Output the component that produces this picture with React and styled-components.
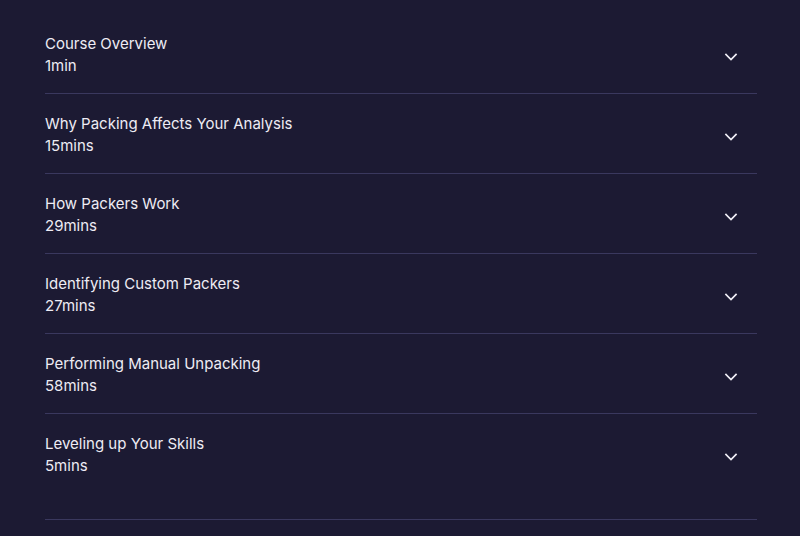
import React from 'react'
import styled, { createGlobalStyle } from 'styled-components'

const GlobalStyle = createGlobalStyle`
  html, body {
    margin: 0;
    padding: 0;
    background: #1c1a33;
  }
  body {
    font-family: Inter, "Noto Sans", sans-serif;
  }
`

const lessons = [
  { title: 'Course Overview', time: '1min' },
  { title: 'Why Packing Affects Your Analysis', time: '15mins' },
  { title: 'How Packers Work', time: '29mins' },
  { title: 'Identifying Custom Packers', time: '27mins' },
  { title: 'Performing Manual Unpacking', time: '58mins' },
  { title: 'Leveling up Your Skills', time: '5mins' },
]

function Chevron() {
  return (
    <svg width="14" height="14" viewBox="0 0 14 14" fill="none">
      <path d="M2 4.5 L7 9.5 L12 4.5" stroke="#f2f0f8" strokeWidth="1.7" strokeLinecap="square" />
    </svg>
  )
}

function App() {
  return (
    <Page>
      <GlobalStyle />
      <List>
        {lessons.map((l) => (
          <Row key={l.title}>
            <Info>
              <Title>{l.title}</Title>
              <Time>{l.time}</Time>
            </Info>
            <Toggle>
              <Chevron />
            </Toggle>
          </Row>
        ))}
      </List>
    </Page>
  )
}

export default App

const Page = styled.div`
  min-height: 536px;
  padding: 14px 43px 0 45px;
  background: #1c1a33;
`

const List = styled.div`
  display: flex;
  flex-direction: column;
`

const Row = styled.div`
  display: flex;
  align-items: flex-start;
  justify-content: space-between;
  padding: 19px 0 16px;
  border-bottom: 1px solid #3a385e;

  &:last-child {
    padding-bottom: 42px;
  }
`

const Info = styled.div`
  display: flex;
  flex-direction: column;
  color: #eeecf4;
  font-size: 15px;
  line-height: 22px;
  letter-spacing: 0;
`

const Title = styled.span``

const Time = styled.span``

const Toggle = styled.div`
  width: 14px;
  height: 14px;
  margin-top: 17px;
  margin-right: 19px;
  display: flex;
`
